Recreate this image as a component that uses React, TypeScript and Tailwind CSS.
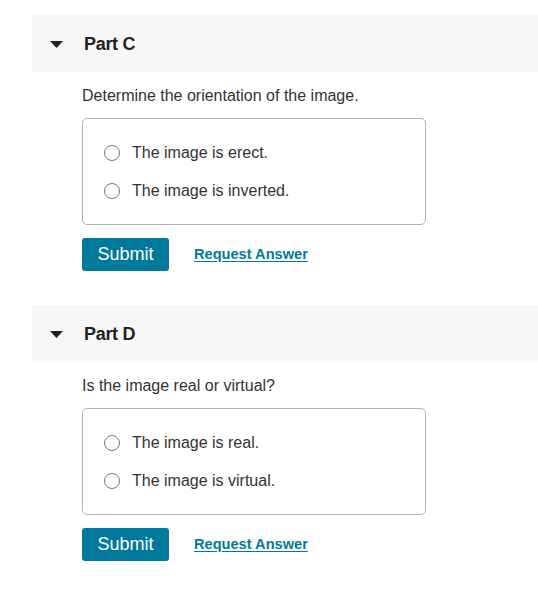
import React from "react";

const font = { fontFamily: '"Liberation Sans", Arial, sans-serif' };

function Part({ title, question, options }: { title: string; question: string; options: string[] }) {
  return (
    <div>
      <div className="ml-[32px] h-[57px] bg-[#f7f7f7] flex items-center">
        <svg width="13" height="7" viewBox="0 0 13 7" className="ml-[18px] mt-[1px]">
          <polygon points="0,0 13,0 6.5,7" fill="#222" />
        </svg>
        <span className="ml-[21px] mt-[2px] text-[18px] font-bold text-[#222] tracking-[-0.3px]">{title}</span>
      </div>
      <div className="pl-[82px]">
        <div className="mt-[15px] text-[16px] leading-[18px] text-[#333]">{question}</div>
        <div className="mt-[13px] w-[344px] h-[107px] border border-[#b3b3b3] rounded-[5px] flex flex-col pt-[25px] gap-[20px]">
          {options.map((o) => (
            <div key={o} className="flex items-center h-[18px]">
              <span className="ml-[21px] w-[16px] h-[16px] rounded-full border border-[#777] bg-white" />
              <span className="ml-[12px] text-[16px] text-[#333]">{o}</span>
            </div>
          ))}
        </div>
        <div className="mt-[13px] flex items-center">
          <button className="w-[87px] h-[33px] bg-[#007a9c] rounded-[3px] text-white text-[18px]">Submit</button>
          <a className="ml-[25px] text-[14.6px] font-bold text-[#007a9c] underline underline-offset-2">Request Answer</a>
        </div>
      </div>
    </div>
  );
}

export default function App() {
  return (
    <div className="w-[538px] h-[606px] bg-white pt-[15px]" style={font}>
      <Part title="Part C" question="Determine the orientation of the image." options={["The image is erect.", "The image is inverted."]} />
      <div className="h-[34px]" />
      <Part title="Part D" question="Is the image real or virtual?" options={["The image is real.", "The image is virtual."]} />
    </div>
  );
}
